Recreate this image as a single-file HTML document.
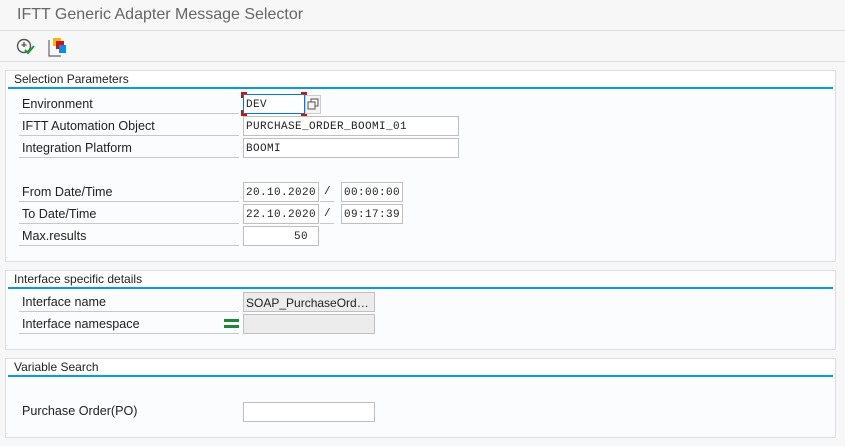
<!DOCTYPE html>
<html><head><style>
*{margin:0;padding:0;box-sizing:border-box}
body{width:845px;height:446px;background:#f7f7f7;font-family:"Liberation Sans",Tahoma,sans-serif;font-size:12px;color:#222;position:relative;overflow:hidden}
.a{position:absolute}
.title{left:0;top:0;width:845px;height:31px;background:#f7f7f7;border-bottom:1px solid #dcdcdc;font-size:16px;color:#666;padding:6px 0 0 17px}
.tb{left:0;top:32px;width:845px;height:30px;border-bottom:1px solid #dcdcdc;background:#f7f7f7}
.grp{border:1px solid #dedede;background:#fbfcfd;left:5px;width:831px}
.gh{position:absolute;left:2px;right:2px;top:0;height:18px;background:#fff;border-bottom:2px solid #0a9bd8;padding:1px 0 0 6px;font-size:12px;color:#222}
.lbl{position:absolute;left:19px;width:220px;height:21px;border-bottom:1px solid #c8c8c8;padding:4px 0 0 3px;font-size:12.6px}
.in{position:absolute;height:20px;border:1px solid #bfbfbf;background:#fff;font-family:"Liberation Mono",monospace;font-size:11px;letter-spacing:0.4px;padding:4px 0 0 2px;color:#222;white-space:nowrap;overflow:hidden}
.gray{background:#ececec;font-family:"Liberation Sans",sans-serif;font-size:12px;letter-spacing:0;padding-top:3px;text-overflow:ellipsis}
.sl{position:absolute;font-family:"Liberation Mono",monospace;font-size:11px;width:14px;height:20px;border-bottom:1px solid #c8c8c8;padding:4px 0 0 4px}
.c{position:absolute;width:6px;height:6px;border-color:#d01010;border-style:solid;border-width:0}
</style></head><body>
<div class="a title">IFTT Generic Adapter Message Selector</div>
<div class="a tb">
<svg class="a" style="left:16px;top:6px" width="20" height="18" viewBox="0 0 20 18"><circle cx="8" cy="8" r="6.5" fill="none" stroke="#555" stroke-width="1.4"/><path d="M8 4v5M5.5 7h5" stroke="#555" stroke-width="1.3"/><path d="M9 12l3 3 6-7" fill="none" stroke="#1a9a3a" stroke-width="2"/></svg>
<svg class="a" style="left:48px;top:5px" width="20" height="20" viewBox="0 0 20 20"><path d="M1 3v16h12" fill="none" stroke="#666" stroke-width="1.2"/><rect x="5" y="1" width="8" height="8" fill="#f5b800"/><rect x="8" y="4" width="8" height="8" fill="#d0101a"/><rect x="11" y="8" width="7" height="8" fill="#0a8fe0"/></svg>
</div>

<div class="a grp" style="top:70px;height:192px">
<div class="gh">Selection Parameters</div>
</div>
<div class="lbl" style="top:93px">Environment</div>
<div class="in" style="left:243px;top:94px;width:62px;border-color:#0a78c8">DEV</div>
<div class="c" style="left:241px;top:92px;border-top-width:2px;border-left-width:2px"></div>
<div class="c" style="left:301px;top:92px;border-top-width:2px;border-right-width:2px"></div>
<div class="c" style="left:241px;top:110px;border-bottom-width:2px;border-left-width:2px"></div>
<div class="c" style="left:301px;top:110px;border-bottom-width:2px;border-right-width:2px"></div>
<div class="a" style="left:305px;top:95px;width:16px;height:19px;border:1px solid #ccc;background:#f4f4f4"><svg width="14" height="17"><rect x="2" y="6" width="7" height="7" fill="none" stroke="#555"/><path d="M5 6V3h7v7H9" fill="none" stroke="#555"/></svg></div>
<div class="lbl" style="top:115px">IFTT Automation Object</div>
<div class="in" style="left:243px;top:116px;width:216px">PURCHASE_ORDER_BOOMI_01</div>
<div class="lbl" style="top:137px">Integration Platform</div>
<div class="in" style="left:243px;top:138px;width:216px">BOOMI</div>

<div class="lbl" style="top:181px">From Date/Time</div>
<div class="in" style="left:243px;top:182px;width:76px">20.10.2020</div>
<div class="sl" style="left:320px;top:182px">/</div>
<div class="in" style="left:341px;top:182px;width:62px">00:00:00</div>
<div class="lbl" style="top:203px">To Date/Time</div>
<div class="in" style="left:243px;top:204px;width:76px">22.10.2020</div>
<div class="sl" style="left:320px;top:204px">/</div>
<div class="in" style="left:341px;top:204px;width:62px">09:17:39</div>
<div class="lbl" style="top:225px">Max.results</div>
<div class="in" style="left:243px;top:226px;width:76px;text-align:right;padding-right:10px">50</div>

<div class="a grp" style="top:270px;height:80px">
<div class="gh">Interface specific details</div>
</div>
<div class="lbl" style="top:291px">Interface name</div>
<div class="in gray" style="left:243px;top:292px;width:132px">SOAP_PurchaseOrder…</div>
<div class="lbl" style="top:313px">Interface namespace</div>
<div class="a" style="left:224px;top:319px;width:15px;height:3px;background:#1a8a3a"></div>
<div class="a" style="left:224px;top:325px;width:15px;height:3px;background:#1a8a3a"></div>
<div class="in gray" style="left:243px;top:314px;width:132px"></div>

<div class="a grp" style="top:358px;height:80px">
<div class="gh">Variable Search</div>
</div>
<div class="a" style="left:22px;top:404px;font-size:12.6px">Purchase Order(PO)</div>
<div class="in" style="left:243px;top:402px;width:132px"></div>
</body></html>
